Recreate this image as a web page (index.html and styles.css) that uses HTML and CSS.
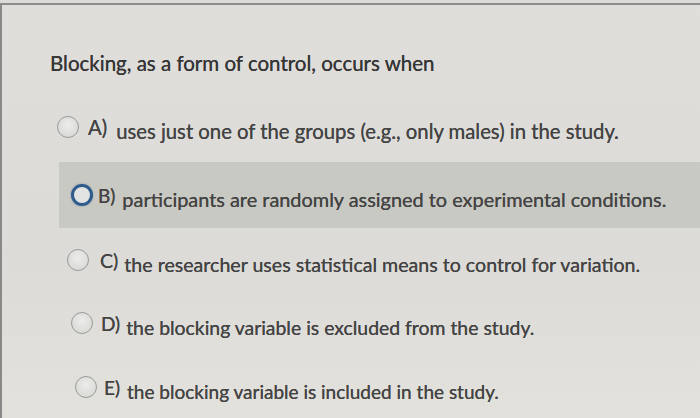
FILE: index.html
```html
<!DOCTYPE html>
<html>
<head>
<meta charset="utf-8">
<link rel="stylesheet" href="styles.css">
</head>
<body>
<div class="screen">
  <h1 class="question">Blocking, as a form of control, occurs when</h1>
  <ul class="answers">
    <li class="answer row-a"><span class="radio"></span><span class="label">A)</span><span class="text">uses just one of the groups (e.g., only males) in the study.</span></li>
    <li class="answer row-b hover"><span class="radio focus"></span><span class="label">B)</span><span class="text">participants are randomly assigned to experimental conditions.</span></li>
    <li class="answer row-c"><span class="radio"></span><span class="label">C)</span><span class="text">the researcher uses statistical means to control for variation.</span></li>
    <li class="answer row-d"><span class="radio"></span><span class="label">D)</span><span class="text">the blocking variable is excluded from the study.</span></li>
    <li class="answer row-e"><span class="radio"></span><span class="label">E)</span><span class="text">the blocking variable is included in the study.</span></li>
  </ul>
</div>
</body>
</html>
```

FILE: styles.css
```css
html, body {
  margin: 0;
  padding: 0;
  background: #dcdbd7;
}
body {
  width: 700px;
  height: 418px;
  overflow: hidden;
  font-family: Lato, "Open Sans", sans-serif;
  color: #444444;
}
.screen {
  margin-top: 3px;
  height: 415px;
  border-top: 2px solid #8e8c8a;
  border-left: 2px solid #8a8886;
  box-sizing: border-box;
  background: linear-gradient(180deg, #dfdedb 0%, #dcdbd7 60%, #e2e1dc 100%);
}
.question {
  margin: 0;
  padding: 43px 0 0 48px;
  height: 30px;
  font-size: 20.5px;
  font-weight: 400;
  color: #363636;
  line-height: 30px;
  text-shadow: 0 0 0.5px #363636;
}
.answers {
  list-style: none;
  margin: 0;
  padding: 0;
}
.answer {
  display: flex;
  align-items: center;
  color: #444444;
  text-shadow: 0 0 0.5px #444444;
}
.label {
  margin-left: 9px;
  margin-right: 6px;
}
.text {
  position: relative;
  top: 4px;
}
.radio {
  width: 22px;
  height: 22px;
  border-radius: 50%;
  box-sizing: border-box;
  border: 1.5px solid #9a9a98;
  background: radial-gradient(circle at 50% 40%, #ececea 0%, #d4d4d1 100%);
  flex: none;
}
.radio.focus {
  border: 3px solid #2f5c8c;
  background: #e2e4e4;
  box-shadow: 0 0 2px rgba(47,92,140,0.5);
}
.row-a { padding-left: 55px; height: 58px; margin-top: 20px; font-size: 20.3px; }
.row-a .label { margin-right: 9px; }
.row-b { margin-left: 57px; padding-left: 12px; height: 66px; margin-top: 6px; background: #c9c9c3; font-size: 19.9px; }
.row-b .label { margin-left: 5px; margin-right: 7px; font-size: 19px; }
.row-c { padding-left: 65px; height: 64px; font-size: 19.6px; }
.row-c .label { margin-left: 11px; }
.row-d { padding-left: 69px; height: 62px; font-size: 19.4px; }
.row-d .label { margin-left: 8px; margin-right: 6px; font-size: 19px; }
.row-e { padding-left: 73px; height: 66px; font-size: 19px; }
.row-e .label { margin-left: 7px; margin-right: 7px; }
```
